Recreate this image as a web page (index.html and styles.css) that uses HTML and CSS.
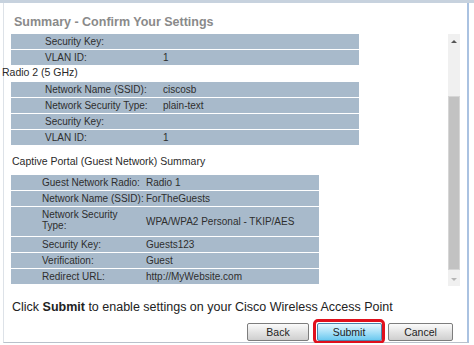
FILE: index.html
```
<!DOCTYPE html>
<html lang="en">
<head>
  <meta charset="UTF-8" />
  <title>Summary - Confirm Your Settings</title>
  <link rel="stylesheet" href="styles.css">
</head>
<body>

<div class="topbar"></div>

<div class="dialog">
  <div class="title">Summary - Confirm Your Settings</div>

  <div class="panel">
    <div class="content">
      <div class="tbl">
        <span class="lbl">Security Key:</span><span></span>
        <span class="lbl">VLAN ID:</span><span>1</span>
      </div>

      <div class="section radio">Radio 2 (5 GHz)</div>
      <div class="tbl">
        <span class="lbl">Network Name (SSID):</span><span>ciscosb</span>
        <span class="lbl">Network Security Type:</span><span>plain-text</span>
        <span class="lbl">Security Key:</span><span></span>
        <span class="lbl">VLAN ID:</span><span>1</span>
      </div>

      <div class="section captive">Captive Portal (Guest Network) Summary</div>
      <div class="tbl guest">
        <span class="lbl">Guest Network Radio:</span><span>Radio 1</span>
        <span class="lbl">Network Name (SSID):</span><span>ForTheGuests</span>
        <span class="lbl two">Network Security<br>Type:</span><span class="tall">WPA/WPA2 Personal - TKIP/AES</span>
        <span class="lbl">Security Key:</span><span>Guests123</span>
        <span class="lbl">Verification:</span><span>Guest</span>
        <span class="lbl">Redirect URL:</span><span>http://MyWebsite.com</span>
      </div>
    </div>

    <div class="scrollbar">
      <div class="arrow up"></div>
      <div class="thumb"></div>
      <div class="arrow down"></div>
    </div>
  </div>

  <div class="hint">Click <b>Submit</b> to enable settings on your Cisco Wireless Access Point</div>

  <div class="buttons">
    <button class="btn">Back</button>
    <div class="highlight">
      <button class="btn primary">Submit</button>
    </div>
    <button class="btn">Cancel</button>
  </div>
</div>

</body>
</html>
```

FILE: styles.css
```
* {
  box-sizing: border-box;
}
html, body {
  margin: 0;
  padding: 0;
  background: #fff;
  font-family: "Liberation Sans", Arial, sans-serif;
  overflow: hidden;
}

.topbar {
  height: 3px;
  background: #c7d2de;
}

.dialog {
  margin-left: 3px;
  width: 466px;
  height: 340px;
  border-left: 1px solid #dde2e8;
  border-right: 2px solid #aac2e1;
  border-bottom: 1px solid #b9c1cb;
}

.title {
  height: 31px;
  padding: 11px 0 0 10px;
  font-size: 12.5px;
  line-height: 16px;
  font-weight: bold;
  color: #8a8a8a;
}

.panel {
  display: flex;
  height: 252px;
}

.content {
  flex: 1;
  padding-left: 7px;
  font-size: 10px;
  color: #2e2e2e;
}

.tbl {
  display: grid;
  grid-template-columns: 152px 1fr;
  row-gap: 1px;
  width: 348px;
}

.tbl span {
  background: #a8bacb;
  height: 15px;
  line-height: 15px;
  white-space: nowrap;
}

.tbl .lbl {
  padding-left: 34px;
}

.guest {
  grid-template-columns: 135px 1fr;
  width: 308px;
}

.guest .lbl {
  padding-left: 31px;
}

.tbl .two {
  height: 29px;
  line-height: 11px;
  padding-top: 2px;
  white-space: normal;
}

.tbl .tall {
  height: 29px;
  line-height: 29px;
}

.section {
  font-size: 10.5px;
  line-height: 14px;
  color: #2a2a2a;
}

.radio {
  margin: 0 0 3px -9px;
}

.captive {
  margin: 9px 0 7px 1px;
}

.scrollbar {
  width: 12px;
  margin-right: 7px;
  background: #f0f0f0;
  display: flex;
  flex-direction: column;
  align-items: center;
}

.arrow {
  width: 12px;
  height: 14px;
  display: flex;
  align-items: center;
  justify-content: center;
}

.arrow::after {
  content: '';
  border-left: 3px solid transparent;
  border-right: 3px solid transparent;
}

.up::after {
  border-bottom: 3px solid #555;
}

.down {
  margin-top: auto;
}

.down::after {
  border-top: 3px solid #b5b5b5;
}

.thumb {
  width: 12px;
  height: 174px;
  margin-top: 48px;
  background: #c2c2c2;
  border: 1px solid #d6d6d6;
}

.hint {
  margin-top: 14px;
  padding-left: 8px;
  font-size: 12.5px;
  line-height: 15px;
  color: #222;
}

.buttons {
  display: flex;
  align-items: center;
  justify-content: flex-end;
  gap: 3px;
  margin-top: 7px;
  padding-right: 14px;
}

.btn {
  height: 18px;
  padding: 0;
  font-family: "Liberation Sans", Arial, sans-serif;
  font-size: 10.5px;
  color: #222;
  background: linear-gradient(#fbfbfb, #e4e4e4 50%, #cfcfcf);
  border: 1px solid #7d7d7d;
  border-radius: 2px;
}

.btn:first-child {
  width: 62px;
}

.btn:last-child {
  width: 65px;
}

.highlight {
  margin: -3px 0 -3px 1px;
  padding: 0.5px;
  border: 3px solid #e0101c;
  border-radius: 5px;
}

.primary {
  display: block;
  width: 63px;
  background: linear-gradient(#e6f7fe, #a9e1f8 50%, #6cc9ef);
  border-color: #4a86ad;
}
```
